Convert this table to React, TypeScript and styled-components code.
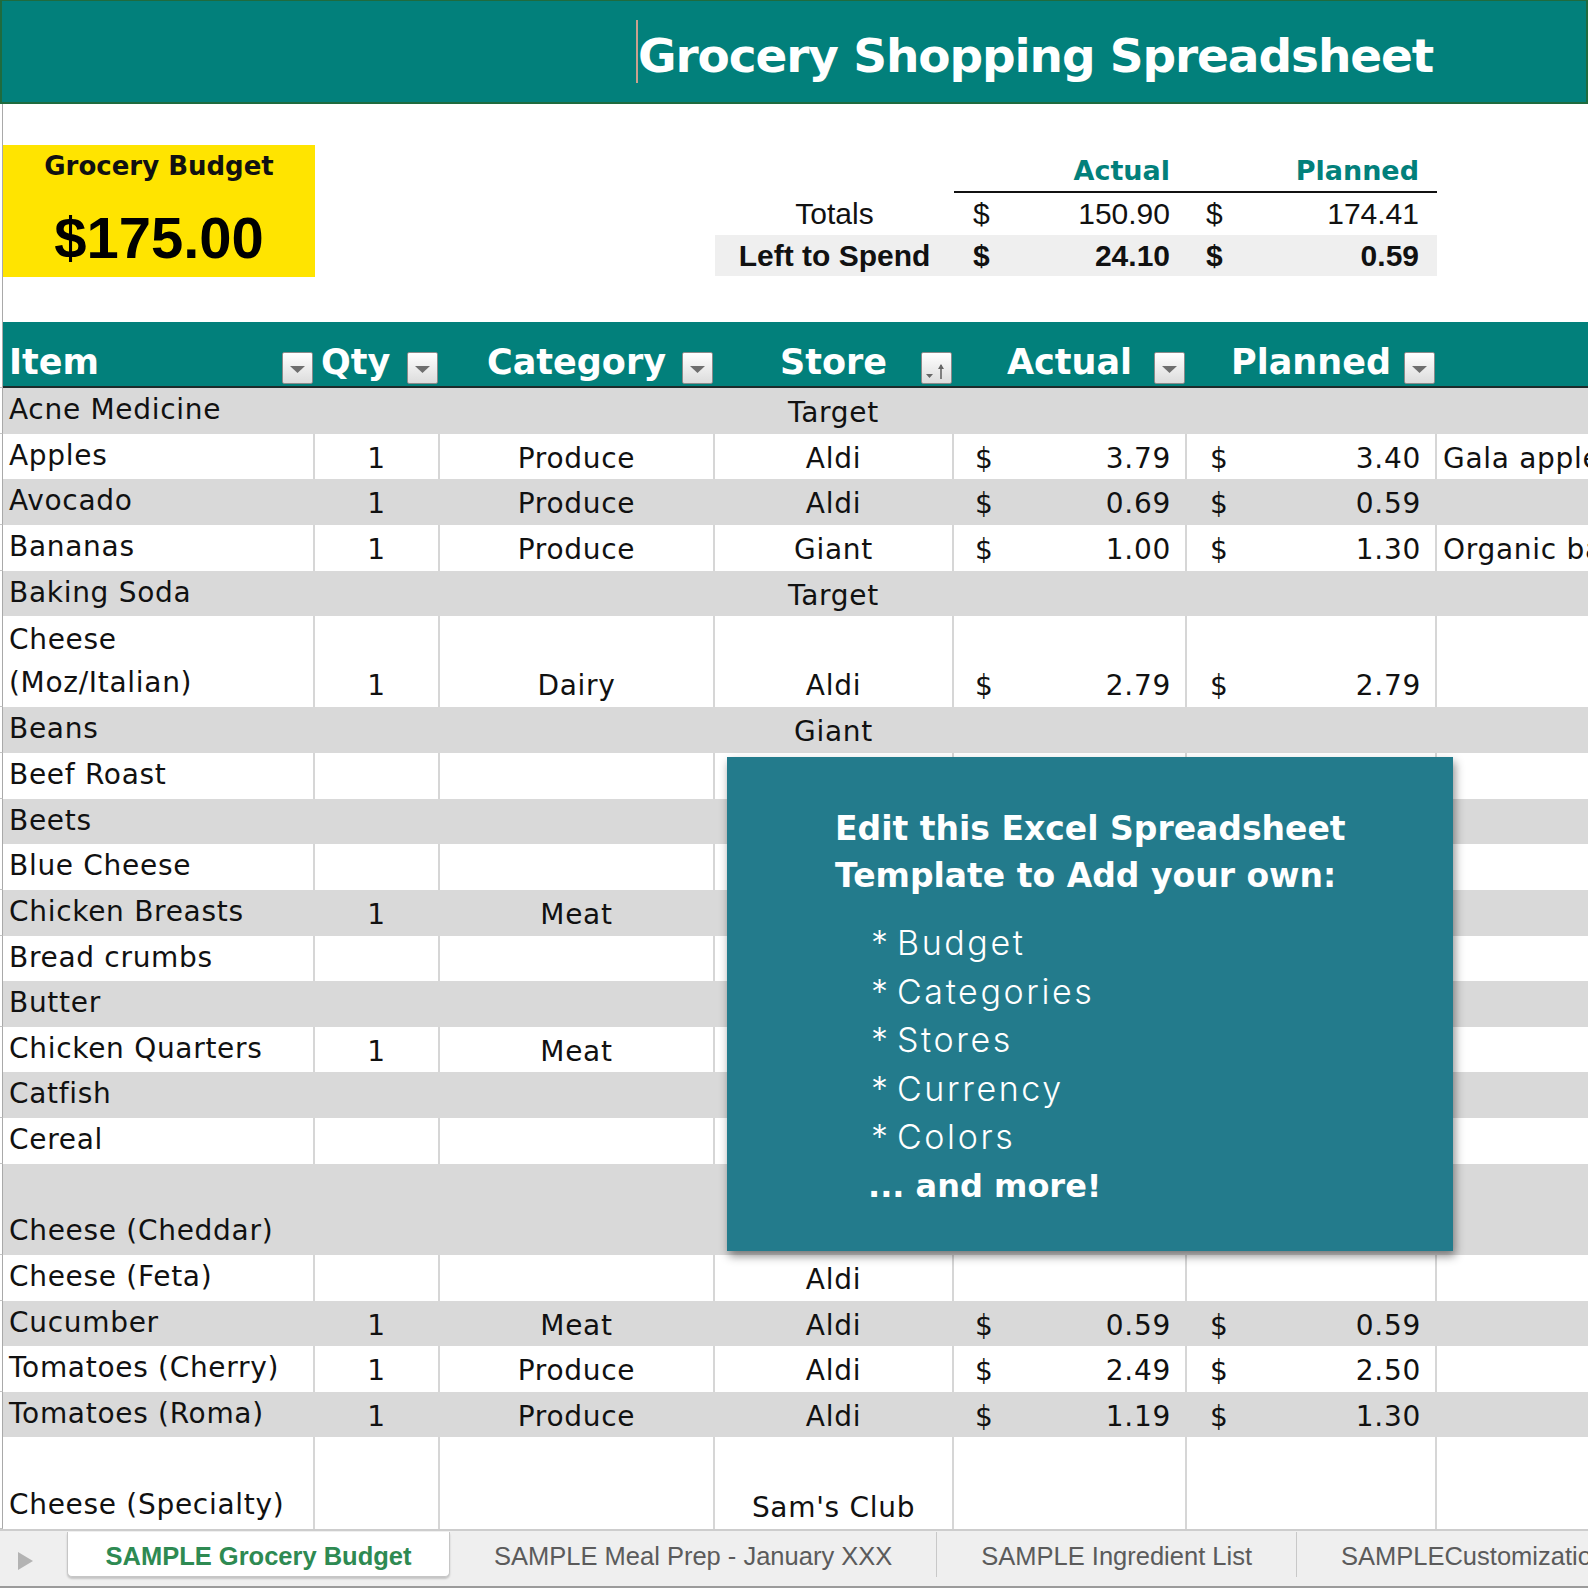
import React from "react";
import styled, { createGlobalStyle } from "styled-components";

const GlobalStyle = createGlobalStyle`
  html, body { margin: 0; padding: 0; background: #ffffff; }
  body { width: 1588px; height: 1588px; overflow: hidden; }
  *, *::before, *::after { box-sizing: border-box; }
`;

const BODY_FONT = `"DejaVu Sans", "Liberation Sans", sans-serif`;
const NARROW_FONT = `"Liberation Sans", Arial, sans-serif`;
const COLS = "3px 312px 125px 275px 239px 233px 250px 151px";
const UNIT = 45.64;
const TEAL = "#02807b";

const Page = styled.div`
  position: relative;
  width: 1588px;
  height: 1588px;
  overflow: hidden;
  display: flex;
  flex-direction: column;
  background: #fff;
  color: #111;
  font-family: ${BODY_FONT};
`;

/* ---------- title ---------- */
const TitleBar = styled.header`
  height: 104px;
  flex-shrink: 0;
  background: ${TEAL};
  border: 2px solid #1f6b3e;
  border-top-width: 1px;
  display: flex;
  align-items: flex-start;
  padding: 25px 0 0 634px;
`;

const Caret = styled.span`
  width: 2px;
  height: 63px;
  margin-top: -6px;
  background: #caa08e;
  flex-shrink: 0;
`;

const TitleText = styled.h1`
  margin: 0;
  font: 700 47px/60px ${BODY_FONT};
  letter-spacing: -1.1px;
  color: #fff;
  white-space: nowrap;
`;

/* ---------- summary ---------- */
const SummaryArea = styled.section`
  height: 218px;
  flex-shrink: 0;
  display: grid;
  grid-template-columns: ${COLS};
  align-items: start;
`;

const Gutter = styled.div<{ $tick?: boolean }>`
  align-self: stretch;
  background: #fff;
  border-right: 1px solid #a9a9a9;
  border-bottom: ${(p) => (p.$tick ? "1px solid #c4c4c4" : "none")};
`;

const BudgetBox = styled.div`
  grid-column: 2;
  margin-top: 41px;
  height: 132px;
  background: #ffe400;
  display: flex;
  flex-direction: column;
  align-items: center;
  padding-top: 6px;
`;

const BudgetLabel = styled.div`
  font: 700 26px/30px ${BODY_FONT};
  color: #111;
`;

const BudgetAmount = styled.div`
  margin-top: 25px;
  font: 700 58px/64px ${NARROW_FONT};
  color: #000;
`;

const SummaryTable = styled.div`
  grid-column: 5 / 8;
  margin-top: 46px;
  display: grid;
  grid-template-columns: 239px 233px 250px;
`;

const SumHead = styled.div<{ $pr: number }>`
  height: 43px;
  border-bottom: 2px solid #111;
  text-align: right;
  padding-right: ${(p) => p.$pr}px;
  font: 700 27px/41px ${BODY_FONT};
  color: ${TEAL};
`;

const SumBlank = styled.div``;

const SumLabel = styled.div<{ $band?: boolean }>`
  height: ${(p) => (p.$band ? 41 : 42)}px;
  background: ${(p) => (p.$band ? "#efefef" : "transparent")};
  text-align: center;
  font: ${(p) => (p.$band ? 700 : 400)} 30px/${(p) => (p.$band ? 41 : 42)}px ${NARROW_FONT};
  color: #111;
`;

const SumMoney = styled.div<{ $band?: boolean; $pl: number; $pr: number }>`
  height: ${(p) => (p.$band ? 41 : 42)}px;
  background: ${(p) => (p.$band ? "#efefef" : "transparent")};
  display: flex;
  justify-content: space-between;
  padding: 0 ${(p) => p.$pr}px 0 ${(p) => p.$pl}px;
  font: ${(p) => (p.$band ? 700 : 400)} 30px/${(p) => (p.$band ? 41 : 42)}px ${NARROW_FONT};
  color: #111;
`;

/* ---------- table header ---------- */
const HeaderRow = styled.div`
  height: 66px;
  flex-shrink: 0;
  display: grid;
  grid-template-columns: ${COLS};
`;

const HeaderCell = styled.div<{ $center?: boolean; $pl?: number }>`
  background: ${TEAL};
  border-bottom: 2px solid #1c2b2b;
  display: grid;
  grid-template-columns: ${(p) => (p.$center ? "1fr auto 1fr" : "auto 1fr")};
  align-items: end;
  padding-left: ${(p) => p.$pl ?? 0}px;
  padding-right: 2px;
`;

const HeaderLabel = styled.span<{ $center?: boolean }>`
  grid-column: ${(p) => (p.$center ? 2 : 1)};
  font: 700 35px/42px ${BODY_FONT};
  color: #fff;
  padding-bottom: 3px;
  white-space: nowrap;
`;

const FilterButton = styled.span<{ $center?: boolean }>`
  grid-column: ${(p) => (p.$center ? 3 : 2)};
  justify-self: end;
  width: 31px;
  height: 32px;
  margin-bottom: 2px;
  border: 1px solid #8a8a8a;
  border-radius: 2px;
  background: linear-gradient(#ffffff, #dcdcdc);
  display: flex;
  svg { display: block; }
`;

const FilterIcon = ({ sort }: { sort?: boolean }) => (
  <svg width="29" height="30" viewBox="0 0 29 30">
    {sort ? (
      <>
        <polygon points="4,21 11,21 7.5,25" fill="#666" />
        <line x1="19" y1="12" x2="19" y2="26" stroke="#666" strokeWidth="1.6" />
        <polygon points="16,16 19,11 22,16" fill="#666" />
      </>
    ) : (
      <polygon points="7,13 22,13 14.5,20" fill="#6f6f6f" />
    )}
  </svg>
);

/* ---------- rows ---------- */
const Rows = styled.div`
  display: flex;
  flex-direction: column;
  flex-shrink: 0;
`;

const Row = styled.div<{ $units: number; $gray: boolean }>`
  height: ${(p) => p.$units * UNIT}px;
  display: grid;
  grid-template-columns: ${COLS};
  background: ${(p) => (p.$gray ? "#d9d9d9" : "#ffffff")};
`;

const Cell = styled.div<{ $gray: boolean; $last?: boolean }>`
  display: flex;
  align-items: flex-end;
  border-right: ${(p) => (p.$last ? "none" : `2px solid ${p.$gray ? "#d9d9d9" : "#d6d6d6"}`)};
  font-size: 28px;
  letter-spacing: 0.7px;
  color: #111;
  min-width: 0;
`;

const ItemCell = styled(Cell)`
  padding: 0 2px 3px 6px;
  line-height: 43px;
  white-space: pre-line;
`;

const TextCell = styled(Cell)`
  justify-content: center;
  line-height: 34px;
  padding-bottom: 4px;
  white-space: nowrap;
`;

const MoneyCell = styled(Cell)<{ $pl: number }>`
  justify-content: space-between;
  line-height: 34px;
  padding: 0 14px 4px ${(p) => p.$pl}px;
  white-space: nowrap;
`;

const NoteCell = styled(Cell)`
  line-height: 34px;
  padding: 0 0 4px 6px;
  white-space: nowrap;
  overflow: hidden;
`;

/* ---------- overlay ---------- */
const Callout = styled.aside`
  position: absolute;
  left: 727px;
  top: 757px;
  width: 726px;
  height: 494px;
  background: #237b8c;
  box-shadow: 2px 5px 9px rgba(0, 0, 0, 0.45);
  padding: 48px 0 0 108px;
  color: #fff;
`;

const CalloutHeading = styled.h2`
  margin: 0;
  font: 700 33px/47px ${BODY_FONT};
  white-space: nowrap;
`;

const CalloutList = styled.ul`
  list-style: none;
  margin: 20px 0 0 36px;
  padding: 0;
`;

const CalloutItem = styled.li`
  font: 300 34px/48.6px Inter, "Open Sans", sans-serif;
  letter-spacing: 2.6px;
  white-space: nowrap;
`;

const Bullet = styled.span`
  display: inline-block;
  width: 26px;
  letter-spacing: 0;
`;

const CalloutMore = styled.li`
  margin-left: -3px;
  font: 700 32px/48.6px ${BODY_FONT};
  white-space: nowrap;
`;

/* ---------- tabs ---------- */
const TabBar = styled.nav`
  height: 59px;
  flex-shrink: 0;
  background: #efefef;
  border-top: 2px solid #cdcdcd;
  border-bottom: 2px solid #9b9b9b;
  display: flex;
  align-items: flex-start;
  white-space: nowrap;
`;

const PlayArea = styled.div`
  width: 67px;
  flex-shrink: 0;
  padding: 21px 0 0 18px;
  svg { display: block; }
`;

const Tab = styled.div<{ $active?: boolean }>`
  flex-shrink: 0;
  height: 45px;
  margin-top: 1px;
  padding: 4px 44px 0;
  font: ${(p) => (p.$active ? 700 : 400)} 25.5px/40px ${NARROW_FONT};
  color: ${(p) => (p.$active ? "#2e8a52" : "#5b5b5b")};
  text-align: center;
  background: ${(p) => (p.$active ? "#ffffff" : "transparent")};
  border: ${(p) => (p.$active ? "1px solid #c6c6c6" : "none")};
  border-top: none;
  border-right: ${(p) => (p.$active ? "1px solid #c6c6c6" : "1px solid #c8c8c8")};
  border-radius: ${(p) => (p.$active ? "0 0 5px 5px" : "0")};
  box-shadow: ${(p) => (p.$active ? "0 2px 2px rgba(0,0,0,0.18)" : "none")};
`;

const ActiveTab = styled(Tab)`
  width: 383px;
  padding: 4px 0 0;
`;

/* ---------- data ---------- */
type Item = {
  item: string;
  qty?: string;
  cat?: string;
  store?: string;
  actual?: string;
  planned?: string;
  note?: string;
  units?: number;
};

const ITEMS: Item[] = [
  { item: "Acne Medicine", store: "Target" },
  { item: "Apples", qty: "1", cat: "Produce", store: "Aldi", actual: "3.79", planned: "3.40", note: "Gala apples" },
  { item: "Avocado", qty: "1", cat: "Produce", store: "Aldi", actual: "0.69", planned: "0.59" },
  { item: "Bananas", qty: "1", cat: "Produce", store: "Giant", actual: "1.00", planned: "1.30", note: "Organic bananas" },
  { item: "Baking Soda", store: "Target" },
  { item: "Cheese\n(Moz/Italian)", qty: "1", cat: "Dairy", store: "Aldi", actual: "2.79", planned: "2.79", units: 2 },
  { item: "Beans", store: "Giant" },
  { item: "Beef Roast" },
  { item: "Beets" },
  { item: "Blue Cheese" },
  { item: "Chicken Breasts", qty: "1", cat: "Meat" },
  { item: "Bread crumbs" },
  { item: "Butter" },
  { item: "Chicken Quarters", qty: "1", cat: "Meat" },
  { item: "Catfish" },
  { item: "Cereal" },
  { item: "Cheese (Cheddar)", units: 2 },
  { item: "Cheese (Feta)", store: "Aldi" },
  { item: "Cucumber", qty: "1", cat: "Meat", store: "Aldi", actual: "0.59", planned: "0.59" },
  { item: "Tomatoes (Cherry)", qty: "1", cat: "Produce", store: "Aldi", actual: "2.49", planned: "2.50" },
  { item: "Tomatoes (Roma)", qty: "1", cat: "Produce", store: "Aldi", actual: "1.19", planned: "1.30" },
  { item: "Cheese (Specialty)", store: "Sam's Club", units: 2 },
];

const Money = ({ value }: { value?: string }) =>
  value ? (
    <>
      <span>$</span>
      <span>{value}</span>
    </>
  ) : null;

export default function App() {
  return (
    <>
      <GlobalStyle />
      <Page>
        <TitleBar>
          <Caret />
          <TitleText>Grocery Shopping Spreadsheet</TitleText>
        </TitleBar>

        <SummaryArea>
          <Gutter />
          <BudgetBox>
            <BudgetLabel>Grocery Budget</BudgetLabel>
            <BudgetAmount>$175.00</BudgetAmount>
          </BudgetBox>
          <SummaryTable>
            <SumBlank />
            <SumHead $pr={17}>Actual</SumHead>
            <SumHead $pr={18}>Planned</SumHead>

            <SumLabel>Totals</SumLabel>
            <SumMoney $pl={19} $pr={17}>
              <span>$</span>
              <span>150.90</span>
            </SumMoney>
            <SumMoney $pl={19} $pr={18}>
              <span>$</span>
              <span>174.41</span>
            </SumMoney>

            <SumLabel $band>Left to Spend</SumLabel>
            <SumMoney $band $pl={19} $pr={17}>
              <span>$</span>
              <span>24.10</span>
            </SumMoney>
            <SumMoney $band $pl={19} $pr={18}>
              <span>$</span>
              <span>0.59</span>
            </SumMoney>
          </SummaryTable>
        </SummaryArea>

        <HeaderRow>
          <Gutter $tick />
          <HeaderCell $pl={6}>
            <HeaderLabel>Item</HeaderLabel>
            <FilterButton><FilterIcon /></FilterButton>
          </HeaderCell>
          <HeaderCell $pl={6}>
            <HeaderLabel>Qty</HeaderLabel>
            <FilterButton><FilterIcon /></FilterButton>
          </HeaderCell>
          <HeaderCell $center>
            <HeaderLabel $center>Category</HeaderLabel>
            <FilterButton $center><FilterIcon /></FilterButton>
          </HeaderCell>
          <HeaderCell $center>
            <HeaderLabel $center>Store</HeaderLabel>
            <FilterButton $center><FilterIcon sort /></FilterButton>
          </HeaderCell>
          <HeaderCell $center>
            <HeaderLabel $center>Actual</HeaderLabel>
            <FilterButton $center><FilterIcon /></FilterButton>
          </HeaderCell>
          <HeaderCell $center>
            <HeaderLabel $center>Planned</HeaderLabel>
            <FilterButton $center><FilterIcon /></FilterButton>
          </HeaderCell>
          <HeaderCell />
        </HeaderRow>

        <Rows>
          {ITEMS.map((r, i) => {
            const gray = i % 2 === 0;
            return (
              <Row key={r.item} $units={r.units ?? 1} $gray={gray}>
                <Gutter $tick />
                <ItemCell $gray={gray}>{r.item}</ItemCell>
                <TextCell $gray={gray}>{r.qty}</TextCell>
                <TextCell $gray={gray}>{r.cat}</TextCell>
                <TextCell $gray={gray}>{r.store}</TextCell>
                <MoneyCell $gray={gray} $pl={21}>
                  <Money value={r.actual} />
                </MoneyCell>
                <MoneyCell $gray={gray} $pl={23}>
                  <Money value={r.planned} />
                </MoneyCell>
                <NoteCell $gray={gray} $last>
                  {r.note}
                </NoteCell>
              </Row>
            );
          })}
        </Rows>

        <TabBar>
          <PlayArea>
            <svg width="15" height="18" viewBox="0 0 15 18">
              <polygon points="0,0 15,9 0,18" fill="#b3b3b3" />
            </svg>
          </PlayArea>
          <ActiveTab $active>SAMPLE Grocery Budget</ActiveTab>
          <Tab>SAMPLE Meal Prep - January XXX</Tab>
          <Tab>SAMPLE Ingredient List</Tab>
          <Tab>SAMPLECustomization</Tab>
        </TabBar>

        <Callout>
          <CalloutHeading>
            Edit this Excel Spreadsheet
            <br />
            Template to Add your own:
          </CalloutHeading>
          <CalloutList>
            {["Budget", "Categories", "Stores", "Currency", "Colors"].map((t) => (
              <CalloutItem key={t}>
                <Bullet>*</Bullet>
                {t}
              </CalloutItem>
            ))}
            <CalloutMore>... and more!</CalloutMore>
          </CalloutList>
        </Callout>
      </Page>
    </>
  );
}
